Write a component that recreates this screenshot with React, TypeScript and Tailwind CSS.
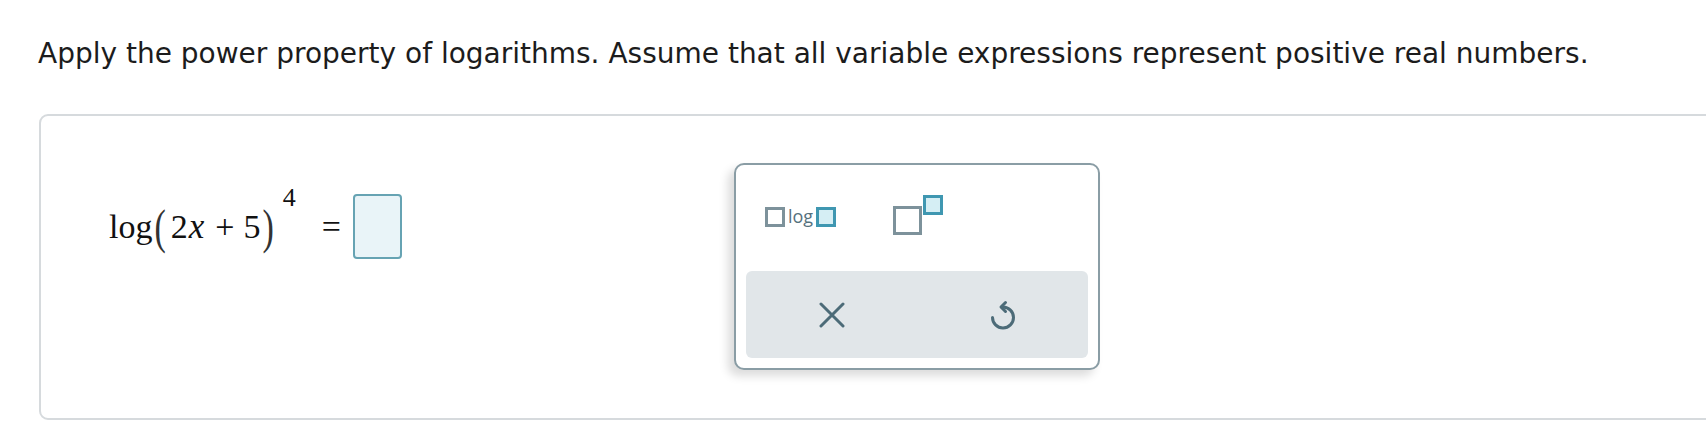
import React from "react";

const serif = "font-['Liberation_Serif','Times_New_Roman',serif]";

function GraySquare({ size = 20 }: { size?: number }) {
  return (
    <span
      className="inline-block border-[3px] border-[#7d929b] bg-white"
      style={{ width: size, height: size }}
    />
  );
}

function TealSquare() {
  return <span className="inline-block w-[20px] h-[20px] border-[3px] border-[#3f97b1] bg-[#d5eef4]" />;
}

function CloseIcon() {
  return (
    <svg width="26" height="26" viewBox="0 0 26 26" fill="none">
      <path d="M2 2 L24 24 M24 2 L2 24" stroke="#4c6b78" strokeWidth="3" strokeLinecap="round" />
    </svg>
  );
}

function UndoIcon() {
  return (
    <svg width="28" height="30" viewBox="0 0 28 30" fill="none">
      <path
        d="M14 7 A10.5 10.5 0 1 1 3.5 17.5"
        stroke="#4c6b78"
        strokeWidth="3"
        strokeLinecap="round"
      />
      <path d="M16.5 2.5 L12 7 L16.5 11.5" stroke="#4c6b78" strokeWidth="3" strokeLinecap="round" strokeLinejoin="round" />
    </svg>
  );
}

export default function App() {
  return (
    <div className="w-[1706px] h-[424px] overflow-hidden bg-white">
      <h1 className="pt-[38px] pl-[38px] text-[28px] leading-[32px] text-[#1c1c1c] font-['DejaVu_Sans','Verdana',sans-serif] whitespace-nowrap">
        Apply the power property of logarithms. Assume that all variable expressions represent positive real numbers.
      </h1>

      {/* 题目框 */}
      <div className="mt-[44px] ml-[39px] w-[1720px] h-[306px] border-2 border-[#d6dadd] rounded-[9px] flex items-start">
        <div className={`w-[693px] pl-[68px] pt-[78px] flex items-center h-[143px] ${serif} text-[#111]`}>
          <span className="text-[34px] leading-none">log</span>
          <span className="text-[34px] leading-none inline-block scale-y-[1.45] ml-[2px] text-[#333]">(</span>
          <span className="text-[34px] leading-none ml-[5px]">2</span>
          <span className="text-[35px] leading-none italic ml-[1px]">x</span>
          <span className="text-[34px] leading-none ml-[11px]">+</span>
          <span className="text-[34px] leading-none ml-[9px]">5</span>
          <span className="text-[34px] leading-none inline-block scale-y-[1.45] ml-[2px] text-[#333]">)</span>
          <span className="text-[26px] leading-none self-start mt-[-9px] ml-[9px]">4</span>
          <span className="text-[34px] leading-none ml-[26px]">=</span>
          <span className="ml-[12px] w-[49px] h-[65px] border-2 border-[#66a3b3] rounded-[4px] bg-[#e9f4f8]" />
        </div>

        {/* 输入面板 */}
        <div className="mt-[47px] w-[366px] h-[207px] border-2 border-[#8a9da5] rounded-[10px] bg-white shadow-[-6px_6px_10px_rgba(0,0,0,0.14)] p-[10px] flex flex-col">
          <div className="h-[96px] shrink-0 flex items-start">
            <div className="ml-[19px] mt-[32px] flex items-center gap-[3px]">
              <GraySquare />
              <span className="text-[18px] leading-none text-[#55717e] font-['Open_Sans',sans-serif] mb-[2px]">log</span>
              <TealSquare />
            </div>
            <div className="ml-[57px] mt-[20px] flex items-start">
              <span className="mt-[11px]">
                <GraySquare size={29} />
              </span>
              <span className="ml-[1px]">
                <TealSquare />
              </span>
            </div>
          </div>
          <div className="flex-1 bg-[#e1e6e9] rounded-[6px] flex items-center">
            <div className="w-[172px] flex justify-center">
              <CloseIcon />
            </div>
            <div className="w-[170px] flex justify-center">
              <UndoIcon />
            </div>
          </div>
        </div>
      </div>
    </div>
  );
}
